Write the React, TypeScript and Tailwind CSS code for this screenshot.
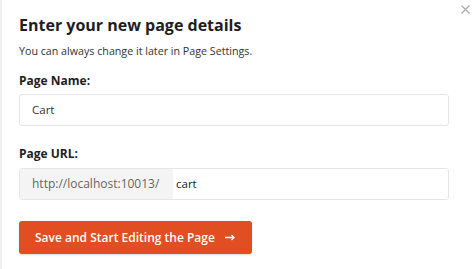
export default function App() {
  return (
    <div
      className="relative h-[269px] w-[474px] overflow-hidden bg-white border-l-2 border-l-[#f0f0f0] text-[#1e1e1e]"
      style={{ fontFamily: '"Open Sans", "Noto Sans", sans-serif' }}
    >
      <button className="absolute right-[1px] top-[1px] flex h-[16px] w-[16px] items-center justify-center text-[#a8a8a8]">
        <svg width="9" height="9" viewBox="0 0 9 9" fill="none" stroke="currentColor" strokeWidth="1.1">
          <path d="M0.5 0.5l8 8M8.5 0.5l-8 8" />
        </svg>
      </button>

      <div className="flex flex-col pl-[17px] pr-[25px] pt-[13px]">
        <h1 className="text-[16px] font-bold leading-[24px]">Enter your new page details</h1>
        <p className="mt-[6px] text-[10.7px] leading-[16px] text-[#333]">You can always change it later in Page Settings.</p>

        <label className="mt-[13px] text-[12px] font-bold leading-[18px]">Page Name:</label>
        <div className="mt-[4px] flex h-[32px] items-center rounded-[3px] border border-[#e6e6e6] bg-white px-[12px] text-[11.5px] text-[#333]">
          Cart
        </div>

        <label className="mt-[19px] text-[12px] font-bold leading-[18px]">Page URL:</label>
        <div className="mt-[5px] flex h-[32px] items-stretch overflow-hidden rounded-[3px] border border-[#e6e6e6] text-[11.5px]">
          <div className="flex w-[153px] items-center bg-[#f4f4f4] pl-[12px] text-[12px] text-[#666]">http://localhost:10013/</div>
          <div className="flex flex-1 items-center bg-white pl-[3px] text-[#222]">cart</div>
        </div>

        <div className="mt-[21px]">
          <button className="flex h-[33px] w-[233px] items-center gap-[10px] rounded-[3px] bg-[#e04e22] pl-[16px] text-[12px] font-semibold text-white shadow-[0_1px_2px_rgba(0,0,0,0.15)]">
            <span>Save and Start Editing the Page</span>
            <svg width="10" height="7" viewBox="0 0 10 7" fill="none" stroke="currentColor" strokeWidth="1.3">
              <path d="M0 3.5h9M6.5 1l2.5 2.5L6.5 6" />
            </svg>
          </button>
        </div>
      </div>
    </div>
  )
}
